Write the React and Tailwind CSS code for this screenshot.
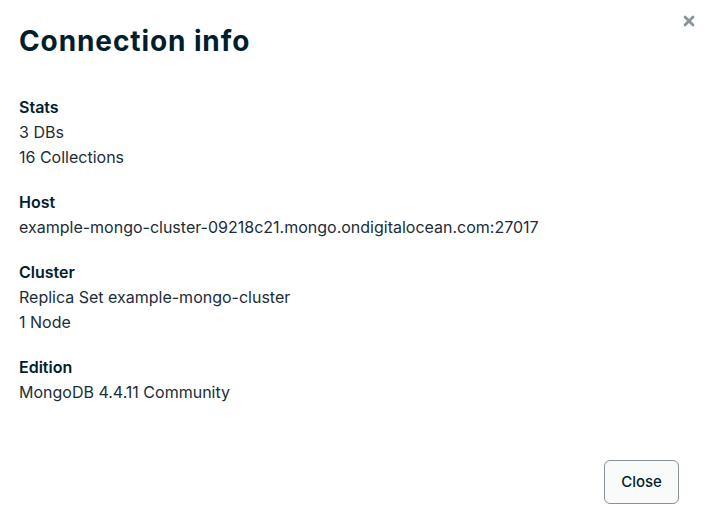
import React from 'react';

const sections = [
  { title: 'Stats', lines: ['3 DBs', '16 Collections'] },
  { title: 'Host', lines: ['example-mongo-cluster-09218c21.mongo.ondigitalocean.com:27017'] },
  { title: 'Cluster', lines: ['Replica Set example-mongo-cluster', '1 Node'] },
  { title: 'Edition', lines: ['MongoDB 4.4.11 Community'] },
];

export default function App() {
  return (
    <div
      className="relative w-[708px] h-[522px] bg-white flex flex-col text-[#001e2b]"
      style={{ fontFamily: 'Inter, "Noto Sans", sans-serif' }}
    >
      <button className="absolute top-[14px] right-[12px] w-[14px] h-[14px] flex items-center justify-center text-[#889397]">
        <svg width="12" height="12" viewBox="0 0 12 12" fill="none">
          <path d="M2 2L10 10M10 2L2 10" stroke="currentColor" strokeWidth="2.8" strokeLinecap="round" />
        </svg>
      </button>

      <div className="px-[19px] pt-[25px]">
        <h1 className="text-[28px] leading-[32px] font-bold tracking-[0.9px]">Connection info</h1>

        <div className="mt-[38px] flex flex-col gap-[20px]">
          {sections.map((s) => (
            <div key={s.title}>
              <div className="text-[16px] leading-[25px] font-semibold">{s.title}</div>
              {s.lines.map((l) => (
                <div key={l} className="text-[16px] leading-[25px] font-normal text-[#1c2d38]">{l}</div>
              ))}
            </div>
          ))}
        </div>
      </div>

      <div className="mt-auto flex justify-end pr-[29px] pb-[18px]">
        <button className="w-[75px] h-[44px] rounded-[6px] border border-[#889397] bg-[#f9fbfa] text-[15px] font-medium text-[#001e2b]">
          Close
        </button>
      </div>
    </div>
  );
}
